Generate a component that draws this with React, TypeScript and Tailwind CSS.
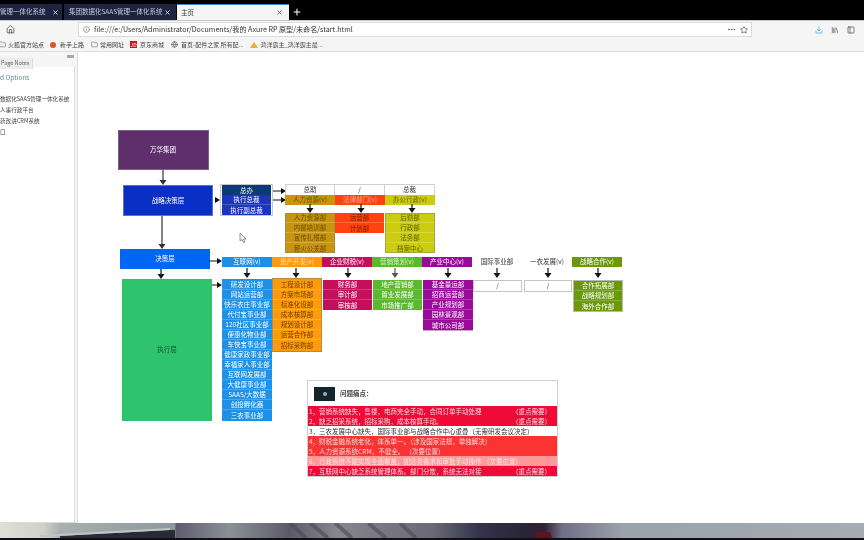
import { Download, Ellipsis, Folder, Globe, Home, Info, Library, PanelLeft, Plus, Star, X } from "lucide-react";

const BLUE_DEPTS = ["研发设计部", "网站运营部", "快乐农庄事业部", "代付宝事业部", "120社区事业部", "便惠化物业部", "车快宝事业部", "健康家政事业部", "幸福家人事业部", "互联网发展部", "大健康事业部", "SAAS/大数据", "创投孵化器", "三农事业部"];
const ORANGE_DEPTS = ["工程设计部", "方案市场部", "标准化设部", "成本核算部", "规划设计部", "运营合作部", "招标采购部"];
const PURPLE_DEPTS = ["基金量运部", "招商运营部", "产业规划部", "园林景观部", "城市公司部"];

const ISSUES = [
  { text: "1，营销系统缺失，售楼，电商完全手动，合同订单手动处理", tag: "（重点需要）", cls: "bg-[#f00a38] text-[#ffd9df]" },
  { text: "2，缺乏招采系统，招标采购，成本核算手动。", tag: "（重点需要）", cls: "bg-[#f00a38] text-[#ffd9df]" },
  { text: "3，三农发展中心缺失，国际事业部与战略合作中心重叠（无需研发会议决定）", tag: "", cls: "bg-white text-[#333333]" },
  { text: "4，财税金融系统老化，体系单一。（涉及国家法规，单独解决）", tag: "", cls: "bg-[#fb3333] text-[#ffd9d9]" },
  { text: "5，人力资源系统CRM，不健全。 （次要位置）", tag: "", cls: "bg-[#fb3333] text-[#ffd9d9]" },
  { text: "6，行政系统不能实现全面覆盖，如法务需求和审批手动操作 （次要位置）", tag: "", cls: "bg-[#ff9999] text-[#ffe6e6]" },
  { text: "7，互联网中心缺乏系统管理体系。部门分散，系统无法对接", tag: "（重点需要）", cls: "bg-[#f00a38] text-[#ffd9df]" },
];

function Cells({ items, className }: { items: string[]; className: string }) {
  return (
    <div className={className}>
      {items.map((item) => (
        <div key={item} className="flex h-[10px] items-center justify-center whitespace-nowrap border-b border-white/20 text-[6.5px] leading-none last:border-b-0">
          {item}
        </div>
      ))}
    </div>
  );
}

function Down({ className, h = 10 }: { className: string; h?: number }) {
  return (
    <svg className={`absolute ${className}`} width="8" height={h} viewBox={`0 0 8 ${h}`}>
      <path d={`M4 0V${h - 4}`} stroke="currentColor" strokeWidth="1.2" />
      <path d={`M0.5 ${h - 5}H7.5L4 ${h}Z`} fill="currentColor" />
    </svg>
  );
}

function Right({ className, w = 13 }: { className: string; w?: number }) {
  return (
    <svg className={`absolute ${className}`} width={w} height="8" viewBox={`0 0 ${w} 8`}>
      <path d={`M0 4H${w - 4}`} stroke="#111111" strokeWidth="1" />
      <path d={`M${w - 5} 1L${w} 4L${w - 5} 7Z`} fill="#111111" />
    </svg>
  );
}

function Tab({ label, active, className }: { label: string; active?: boolean; className: string }) {
  return (
    <div className={`flex h-4 shrink-0 items-center justify-between overflow-hidden text-[6.5px] ${active ? "border-t border-[#3a8ad0] bg-[#f5f5f5] text-[#333333]" : "bg-[#1d2340] text-[#c7cad6]"} ${className}`}>
      <span className="whitespace-nowrap">{label}</span>
      <X size={7} strokeWidth={2.5} className={`shrink-0 ${active ? "text-[#444444]" : "text-white"}`} />
    </div>
  );
}

function Wallpaper() {
  return (
    <svg className="block h-[17px] w-full" viewBox="0 0 864 17" preserveAspectRatio="none">
      <defs>
        <linearGradient id="wall" x1="0" x2="864" y1="0" y2="0" gradientUnits="userSpaceOnUse">
          <stop offset="0" stopColor="#dfe0d6" />
          <stop offset="0.05" stopColor="#d0d2ca" />
          <stop offset="0.07" stopColor="#a9b0b0" />
          <stop offset="0.202" stopColor="#8e979c" />
          <stop offset="0.204" stopColor="#5f5b70" />
          <stop offset="0.266" stopColor="#8a9296" />
          <stop offset="0.335" stopColor="#5c5a68" />
          <stop offset="0.39" stopColor="#86868e" />
          <stop offset="0.5" stopColor="#6a6a78" />
          <stop offset="0.555" stopColor="#33334a" />
          <stop offset="0.615" stopColor="#2a2236" />
          <stop offset="0.63" stopColor="#33212f" />
          <stop offset="0.65" stopColor="#6f6e88" />
          <stop offset="0.72" stopColor="#9aa2aa" />
          <stop offset="1" stopColor="#a5acb2" />
        </linearGradient>
      </defs>
      <rect width="864" height="17" fill="url(#wall)" />
      <path d="M60 13L170 7L175 7V15H60Z" fill="#2a2a36" />
      <path d="M40 12L170 5V7L40 14Z" fill="#c0c5c3" />
      <path d="M290 0L306 15M310 0L328 15M335 0L352 15M368 0L386 15M400 0L416 15" stroke="#4b4b55" strokeWidth="4" opacity="0.6" />
      <path d="M534 9L550 9L552 15L536 15Z" fill="#5a1522" />
      <rect y="15" width="864" height="2" fill="#0e0e14" />
    </svg>
  );
}

export default function App() {
  return (
    <div className="flex h-[540px] w-[864px] flex-col overflow-hidden bg-white font-['Noto_Sans_CJK_SC','Noto_Sans',sans-serif] blur-[0.45px]">
      {/* tab strip */}
      <div className="flex h-[20px] shrink-0 items-end bg-black">
        <Tab label="管理一体化系统" className="w-[62px] pr-[3px]" />
        <Tab label="集团数据化SAAS管理一体化系统" className="ml-[2px] w-[112px] pl-[5px] pr-[5px]" />
        <Tab label="主页" active className="ml-px w-[112px] pl-[4px] pr-[6px]" />
        <Plus size={10} strokeWidth={2.5} className="mb-[3px] ml-[3px] text-white" />
      </div>

      {/* address bar */}
      <div className="flex h-[18px] shrink-0 items-center border-t border-[#c9c9c9] bg-[#f5f5f5]">
        <Home size={9} className="ml-[6px] text-[#444444]" />
        <div className="ml-[63px] flex h-[15px] w-[674px] items-center border border-[#dcdcdc] bg-white pl-[4px] pr-[3px] text-[7.1px] text-[#333333]">
          <Info size={7} className="mr-[4px] text-[#666666]" />
          <span className="flex-1 whitespace-nowrap">file:///e:/Users/Administrator/Documents/我的 Axure RP 原型/未命名/start.html</span>
          <Ellipsis size={9} className="mr-[4px] text-[#555555]" />
          <Star size={8} className="text-[#444444]" />
        </div>
        <Download size={8} className="ml-[63px] text-[#4a9fd8]" />
        <Library size={8} className="ml-[8px] text-[#555555]" />
        <PanelLeft size={8} className="ml-[8px] text-[#444444]" />
      </div>

      {/* bookmarks */}
      <div className="flex h-[14px] shrink-0 items-center border-b border-[#e0e0e0] bg-[#f5f5f5] text-[6px] text-[#444444]">
        <Folder size={7} className="ml-[-1px] mr-[2px] text-[#666666]" />
        <span className="whitespace-nowrap">火狐官方站点</span>
        <span className="ml-[6px] mr-[4px] size-[6px] rounded-full bg-[#d9552b]" />
        <span className="whitespace-nowrap">新手上路</span>
        <Folder size={7} className="ml-[7px] mr-[2px] text-[#666666]" />
        <span className="whitespace-nowrap">常用网址</span>
        <span className="ml-[6px] mr-[3px] flex size-[7px] items-center justify-center bg-[#c8161d] text-[5px] text-white">JD</span>
        <span className="whitespace-nowrap">京东商城</span>
        <Globe size={7} className="ml-[7px] mr-[3px] text-[#555555]" />
        <span className="whitespace-nowrap">首页-配件之家 所有配...</span>
        <span className="ml-[6px] mr-[3px] h-0 w-0 border-x-[4px] border-b-[6px] border-x-transparent border-b-[#e2b23a]" />
        <span className="whitespace-nowrap">鸿洋霸主_鸿洋霸主最...</span>
      </div>

      {/* page */}
      <div className="flex min-h-0 flex-1">
        <aside className="flex w-[78px] shrink-0 flex-col border-b border-r border-[#dddddd] bg-[#f5f5f5]">
          <div className="flex h-[15px] items-start justify-end pr-[3px] pt-[3px]">
            <span className="h-[3px] w-[7px] bg-[#a8a8a8]" />
          </div>
          <div className="mr-[2px] flex min-h-0 flex-1 flex-col border-r border-[#dddddd] bg-white">
            <div className="-mt-[9px] flex h-[11px] w-[33px] items-center border-r border-[#dddddd] bg-[#ececec] pl-px text-[5.5px] whitespace-nowrap text-[#666666]">Page Notes</div>
            <div className="mt-[5px] text-[6.5px] leading-none whitespace-nowrap text-[#5d8a9c]">d Options</div>
            <div className="mt-[14px] flex flex-col gap-[3px] text-[5.6px] leading-[8px] whitespace-nowrap text-[#444444]">
              <span>数据化SAAS管理一体化系统</span>
              <span>人事行政平台</span>
              <span>药改进CRM系统</span>
              <span>口</span>
            </div>
          </div>
        </aside>

        {/* free canvas of the org chart: coordinates are relative to the page */}
        <main className="relative flex-1 bg-white text-white">
          <div className="absolute left-[39.5px] top-[78px] flex h-[40px] w-[91px] items-center justify-center border border-[#7a5f85] bg-[#5f2f6c] text-[6.5px]">万华集团</div>
          <Down h={15} className="left-[81px] top-[118px] text-[#333333]" />
          <div className="absolute left-[45px] top-[133px] flex h-[31px] w-[90px] items-center justify-center border border-[#5c72c8] bg-[#0a2fc4] text-[6.5px]">战略决策层</div>
          <Down h={33} className="left-[80px] top-[164px] text-[#333333]" />
          <div className="absolute left-[42px] top-[197px] flex h-[20px] w-[90px] items-center justify-center bg-[#0066f5] text-[6.5px]">决策层</div>
          <Down className="left-[79px] top-[217px] text-[#111111]" />
          <div className="absolute left-[44px] top-[227px] flex h-[142px] w-[90px] items-center justify-center bg-[#2ec46d] text-[6.5px] text-[#14532d]">执行层</div>

          <Right w={5} className="left-[137px] top-[144px]" />
          <div className="absolute left-[142px] top-[132px] h-[32px] w-[53px] border border-[#c8c8c8] bg-white px-px">
            <Cells items={["总办"]} className="bg-[#0a3a78]" />
            <Cells items={["执行总裁", "执行副总裁"]} className="bg-[#1c35bd]" />
          </div>

          <Right className="left-[195px] top-[135px]" />
          <Right className="left-[195px] top-[144px]" />
          <div className="absolute left-[207px] top-[132px] grid w-[150px] grid-cols-3 border-t border-[#d0d0d0] text-[6.5px] text-[#333333]">
            <div className="flex h-[10px] items-center justify-center border-x border-[#d0d0d0]">总助</div>
            <div className="flex h-[10px] items-center justify-center border-r border-[#d0d0d0]">/</div>
            <div className="flex h-[10px] items-center justify-center border-r border-[#d0d0d0]">总裁</div>
            <div className="flex h-[10px] items-center justify-center bg-[#c8960e] text-[#6b4c00]">人力资源(v)</div>
            <div className="flex h-[10px] items-center justify-center bg-[#ff4210] text-[#ffb09a]">法律部门(v)</div>
            <div className="flex h-[10px] items-center justify-center bg-[#cccc10] text-[#5f5f00]">办公行政(v)</div>
          </div>
          <Down h={9} className="left-[228px] top-[152px] text-[#111111]" />
          <Down h={9} className="left-[279px] top-[152px] text-[#111111]" />
          <Down h={9} className="left-[330px] top-[152px] text-[#111111]" />
          <Cells items={["人力资源部", "内部培训部", "宣传扎根部", "薪火公关部"]} className="absolute left-[207px] top-[161px] w-[50px] bg-[#c8960e] text-[#6b4c00] ring-1 ring-inset ring-[#a88a3a]" />
          <Cells items={["运营部", "计划部"]} className="absolute left-[257px] top-[161px] w-[49px] bg-[#ff4210] text-[#7a1e00]" />
          <Cells items={["后勤部", "行政部", "法务部", "档案中心"]} className="absolute left-[307px] top-[161px] w-[50px] bg-[#cccc10] text-[#5f5f00] ring-1 ring-inset ring-[#a6a640]" />

          <Right className="left-[131px] top-[205px]" />
          <div className="absolute left-[144px] top-[205px] flex text-[6.5px]">
            <div className="flex h-[10px] w-[50px] items-center justify-center bg-[#1e90e6]">互联网(v)</div>
            <div className="flex h-[10px] w-[50px] items-center justify-center bg-[#ff9a0c] text-[#ffe0a8]">资产开发(v)</div>
            <div className="flex h-[10px] w-[50px] items-center justify-center bg-[#c4105c]">企业财税(v)</div>
            <div className="flex h-[10px] w-[50px] items-center justify-center bg-[#5cb82e] text-[#d8f5c8]">营销策划(v)</div>
            <div className="flex h-[10px] w-[50px] items-center justify-center bg-[#990a99]">产业中心(v)</div>
            <div className="flex h-[10px] w-[50px] items-center justify-center text-[#333333]">国际事业部</div>
            <div className="flex h-[10px] w-[50px] items-center justify-center text-[#333333]">一衣发展(v)</div>
            <div className="flex h-[10px] w-[50px] items-center justify-center bg-[#6a9a0a]">战略合作(v)</div>
          </div>

          <Down className="left-[165px] top-[216px] text-[#111111]" />
          <Down className="left-[214px] top-[216px] text-[#111111]" />
          <Down className="left-[266px] top-[216px] text-[#111111]" />
          <Down className="left-[313px] top-[216px] text-[#555555]" />
          <Down className="left-[366px] top-[216px] text-[#111111]" />
          <Down className="left-[415px] top-[216px] text-[#111111]" />
          <Down className="left-[466px] top-[216px] text-[#111111]" />
          <Down className="left-[516px] top-[216px] text-[#111111]" />
          <Right w={10} className="left-[134px] top-[229px]" />

          <Cells items={BLUE_DEPTS} className="absolute left-[144px] top-[227px] w-[50px] bg-[#1e90e6] py-px" />
          <Cells items={ORANGE_DEPTS} className="absolute left-[194px] top-[226px] w-[50px] border border-[#b58a3c] bg-[#ff9a0c] py-px text-[#6b4300]" />
          <Cells items={["财务部", "审计部", "审核部"]} className="absolute left-[245px] top-[228px] w-[49px] bg-[#c4105c]" />
          <Cells items={["地产营销部", "置业发展部", "市场推广部"]} className="absolute left-[295px] top-[228px] w-[49px] bg-[#5cb82e]" />
          <Cells items={PURPLE_DEPTS} className="absolute left-[345px] top-[228px] w-[50px] border-b border-[#c9a8c9] bg-[#990a99]" />
          <div className="absolute left-[395px] top-[228px] flex text-[6.5px] text-[#444444]">
            <div className="flex h-[12px] w-[49px] items-center justify-center border border-[#c4c4c4]">/</div>
            <div className="ml-[2px] flex h-[12px] w-[48px] items-center justify-center border border-[#c4c4c4]">/</div>
          </div>
          <Cells items={["合作拓展部", "战略规划部", "海外合作部"]} className="absolute left-[495px] top-[228px] w-[50px] border border-[#b8b8b8] bg-[#6a9a0a]" />

          <div className="absolute left-[229px] top-[328px] w-[251px] border border-[#cfcfcf] bg-white text-[6.5px]">
            <div className="flex h-[25px] items-center pl-[6px]">
              <div className="mr-[5px] flex h-[14px] w-[21px] items-center justify-center bg-[#15242a]">
                <span className="size-[4px] rounded-full bg-[#8fb4b0]" />
              </div>
              <span className="text-[6.5px] font-bold text-[#444444]">问题痛点：</span>
            </div>
            {ISSUES.map((issue) => (
              <div key={issue.text} className={`flex h-[10px] items-center justify-between whitespace-nowrap pl-px pr-[6px] leading-none ${issue.cls}`}>
                <span>{issue.text}</span>
                {issue.tag ? <span>{issue.tag}</span> : null}
              </div>
            ))}
          </div>

          {/* mouse pointer */}
          <svg className="absolute left-[161px] top-[180px]" width="8" height="11" viewBox="0 0 8 11">
            <path d="M1 1V9L3 7.5L4.5 10.5L6 10L4.5 7H7Z" fill="#f4f4f4" stroke="#666666" strokeWidth="0.7" />
          </svg>
        </main>
      </div>

      <Wallpaper />
    </div>
  );
}
